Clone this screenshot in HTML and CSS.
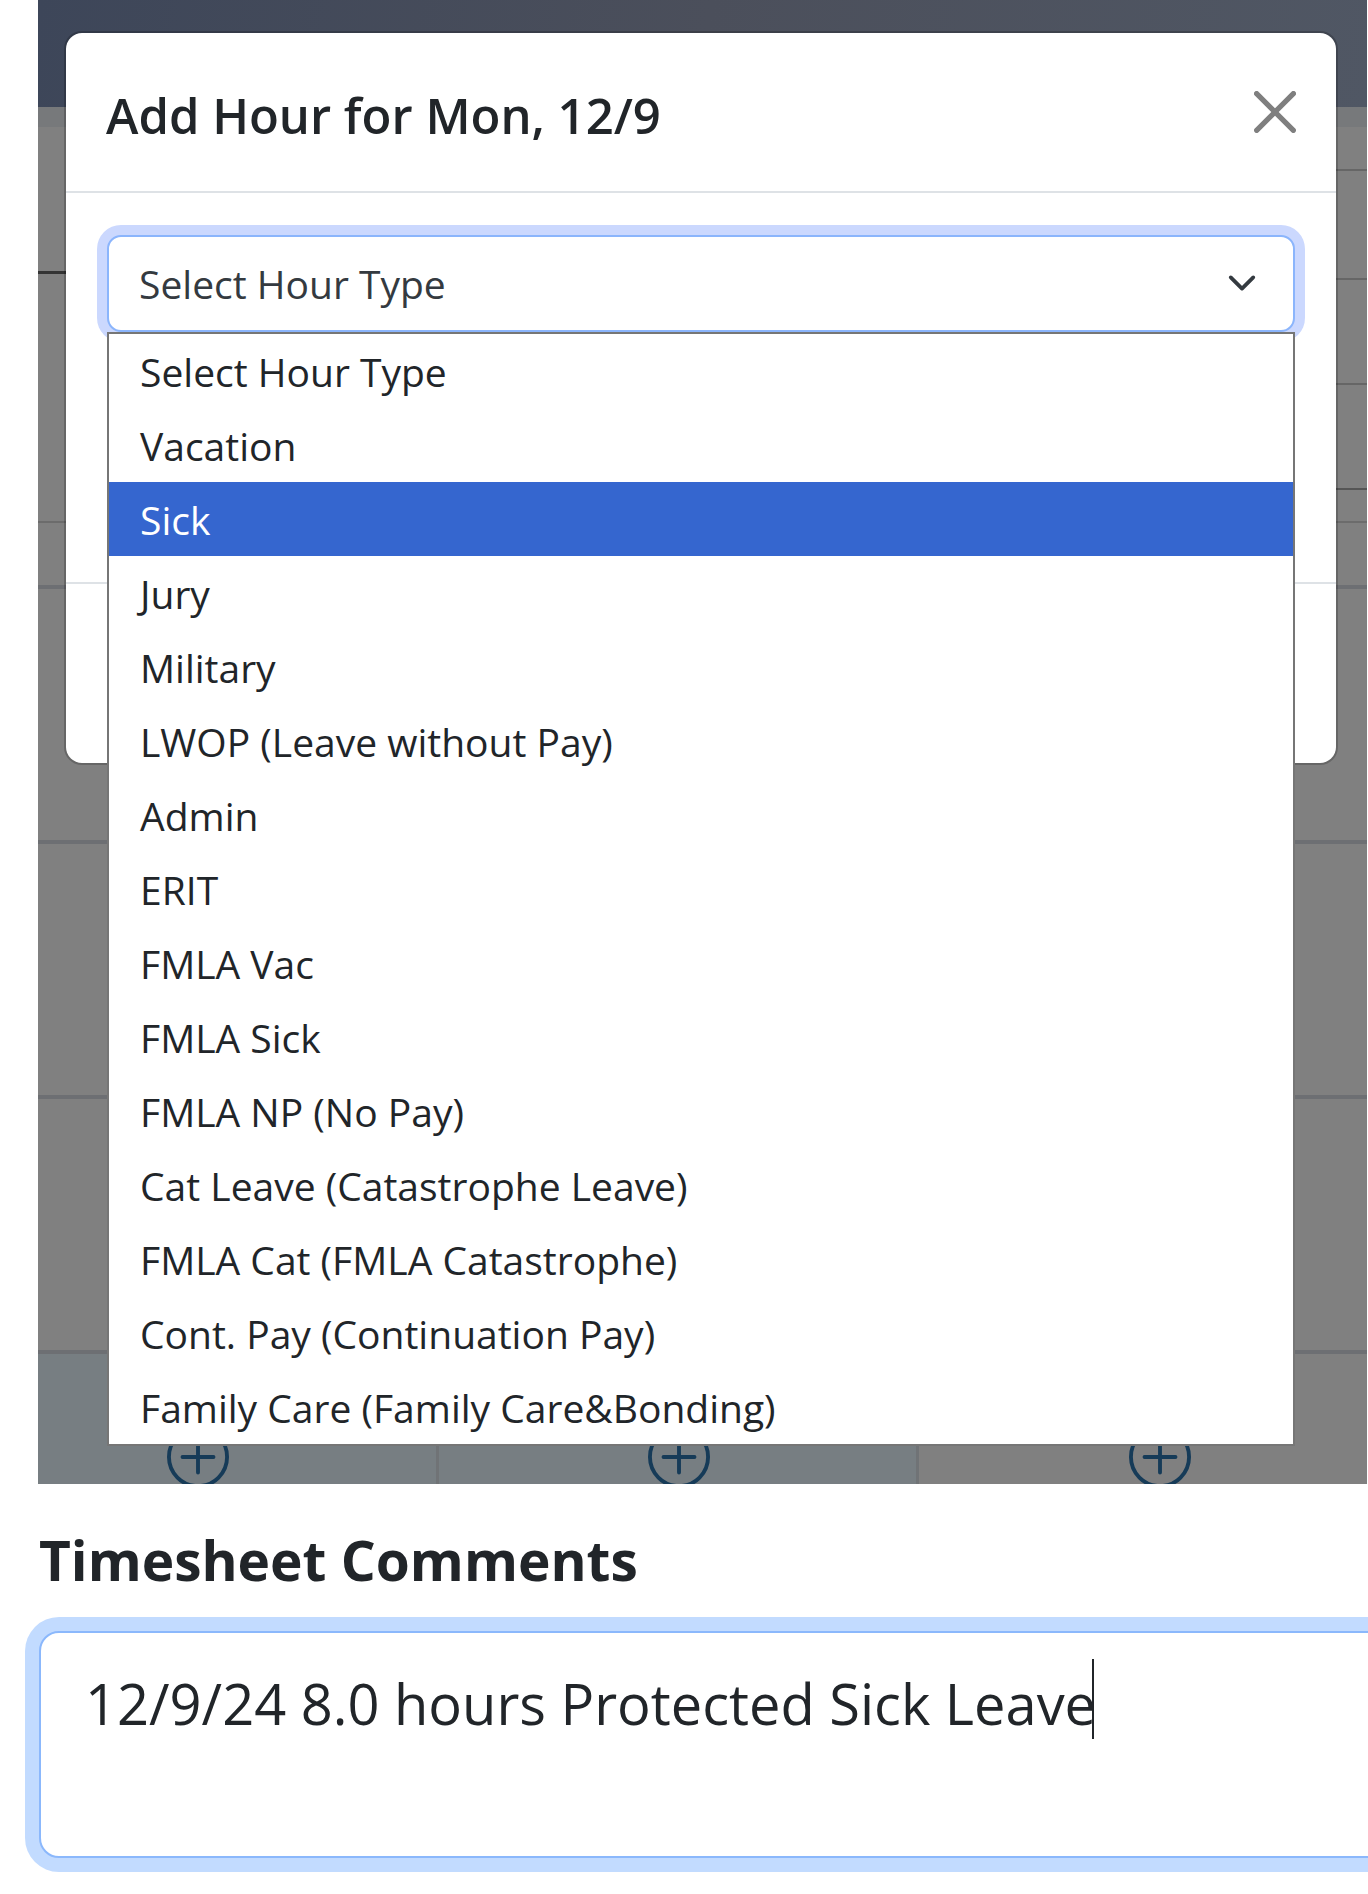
FILE: index.html
```html
<!DOCTYPE html>
<html lang="en">
<head>
    <meta charset="UTF-8">
    <meta name="viewport" content="width=device-width, initial-scale=1.0">
    <title>Timesheet - Add Hour</title>
    <link rel="stylesheet" href="styles.css">
</head>
<body>
    <main class="timesheet">
        <div class="banner"></div>
        <div class="toolbar"></div>

        <!-- employee details behind the dialog -->
        <div class="details">
            <div class="details-name"></div>
            <div class="details-rows">
                <div class="details-row short"></div>
                <div class="details-row tall"></div>
                <div class="details-row"></div>
                <div class="details-row last"></div>
            </div>
        </div>

        <!-- calendar -->
        <div class="calendar">
            <div class="calendar-title"></div>
            <div class="calendar-days"></div>
            <div class="week"></div>
            <div class="week"></div>
            <div class="week"></div>
            <div class="week week-current">
                <div class="day active">
                    <button type="button" class="add-btn" aria-label="Add hour">
                        <svg viewBox="0 0 16 16" fill="none" stroke="currentColor"><circle cx="8" cy="8" r="7.5"/><path d="M4 8h8M8 4v8" stroke-linecap="round"/></svg>
                    </button>
                </div>
                <div class="day active">
                    <button type="button" class="add-btn" aria-label="Add hour">
                        <svg viewBox="0 0 16 16" fill="none" stroke="currentColor"><circle cx="8" cy="8" r="7.5"/><path d="M4 8h8M8 4v8" stroke-linecap="round"/></svg>
                    </button>
                </div>
                <div class="day">
                    <button type="button" class="add-btn" aria-label="Add hour">
                        <svg viewBox="0 0 16 16" fill="none" stroke="currentColor"><circle cx="8" cy="8" r="7.5"/><path d="M4 8h8M8 4v8" stroke-linecap="round"/></svg>
                    </button>
                </div>
            </div>
        </div>

        <div class="modal" role="dialog" aria-labelledby="modalTitle">
            <div class="modal-header">
                <h2 id="modalTitle">Add Hour for Mon, 12/9</h2>
                <button type="button" class="close" aria-label="Close">
                    <svg viewBox="0 0 16 16" fill="currentColor"><path d="M.293.293a1 1 0 0 1 1.414 0L8 6.586 14.293.293a1 1 0 1 1 1.414 1.414L9.414 8l6.293 6.293a1 1 0 0 1-1.414 1.414L8 9.414l-6.293 6.293a1 1 0 0 1-1.414-1.414L6.586 8 .293 1.707a1 1 0 0 1 0-1.414z"/></svg>
                </button>
            </div>
            <div class="modal-body">
                <div class="select-wrap">
                    <select id="hourType" class="hour-select" aria-label="Hour type">
                        <option>Select Hour Type</option>
                    </select>
                    <svg class="chevron" viewBox="0 0 16 16" fill="none" stroke="currentColor" stroke-width="2" stroke-linecap="round" stroke-linejoin="round"><path d="m2 5 6 6 6-6"/></svg>
                    <ul class="options" role="listbox" aria-label="Hour type">
                        <li role="option">Select Hour Type</li>
                        <li role="option">Vacation</li>
                        <li role="option" class="selected" aria-selected="true">Sick</li>
                        <li role="option">Jury</li>
                        <li role="option">Military</li>
                        <li role="option">LWOP (Leave without Pay)</li>
                        <li role="option">Admin</li>
                        <li role="option">ERIT</li>
                        <li role="option">FMLA Vac</li>
                        <li role="option">FMLA Sick</li>
                        <li role="option">FMLA NP (No Pay)</li>
                        <li role="option">Cat Leave (Catastrophe Leave)</li>
                        <li role="option">FMLA Cat (FMLA Catastrophe)</li>
                        <li role="option">Cont. Pay (Continuation Pay)</li>
                        <li role="option">Family Care (Family Care&amp;Bonding)</li>
                    </ul>
                </div>
            </div>
            <div class="modal-footer"></div>
        </div>
    </main>

    <section class="comments">
        <label for="comments">Timesheet Comments</label>
        <div class="comments-field">
            <textarea id="comments" name="comments" spellcheck="false">12/9/24 8.0 hours Protected Sick Leave</textarea>
            <span class="caret"></span>
        </div>
    </section>
</body>
</html>
```

FILE: styles.css
```css
* {
    box-sizing: border-box;
}

body {
    margin: 0;
    background: #fff;
    color: #212529;
    font-family: "Segoe UI", "Open Sans", "Noto Sans", sans-serif;
    overflow-x: hidden;
}

button {
    padding: 0;
    border: none;
    background: none;
    cursor: pointer;
}

button svg {
    display: block;
    width: 100%;
    height: 100%;
}

/* page behind the dialog */
.timesheet {
    position: relative;
    margin: 0 1px 0 38px;
    background: #808080;
    overflow: hidden;
}

.banner {
    height: 107px;
    background: linear-gradient(100deg, #3d4659, #4b4f5b 50%, #505764);
}

.toolbar {
    height: 20px;
    background: #77797b;
}

.details {
    display: grid;
    grid-template-columns: 1fr 1fr;
    height: 362px;
}

.details-name {
    height: 147px;
    border-bottom: 3px solid #343434;
}

.details-row {
    height: 105px;
    border-bottom: 2px solid #666;
}

.details-row.short {
    height: 44px;
}

.details-row.tall {
    height: 109px;
}

.details-row.last {
    border-bottom-color: #555;
}

.calendar {
    margin: 0 -33px 0 -80px;
}

.calendar-title {
    height: 34px;
    border-bottom: 2px solid #6c6c6c;
}

.calendar-days {
    height: 66px;
    border-bottom: 4px solid #6d6f73;
}

.week {
    height: 255px;
    border-bottom: 4px solid #6d6f73;
}

.week-current {
    display: grid;
    grid-template-columns: repeat(3, 1fr);
    height: 130px;
    border-bottom: none;
}

.day {
    display: flex;
    justify-content: center;
    padding-top: 72px;
}

.day.active {
    background: #777e82;
    box-shadow: inset -3px 0 0 #707376;
}

.add-btn {
    width: 62px;
    height: 62px;
    color: #163b58;
}

/* dialog */
.modal {
    position: absolute;
    top: 31px;
    left: 26px;
    right: 29px;
    background: #fff;
    background-clip: padding-box;
    border: 2px solid rgba(0, 0, 0, 0.2);
    border-radius: 18px;
}

.modal-header {
    display: flex;
    align-items: center;
    justify-content: space-between;
    height: 160px;
    padding: 0 40px;
    border-bottom: 2px solid #dee2e6;
}

.modal-header h2 {
    margin: 0;
    padding-top: 6px;
    font-size: 49px;
    font-weight: 600;
    line-height: 72px;
}

.close {
    width: 42px;
    height: 42px;
    color: #7f7f7f;
}

.modal-body {
    height: 389px;
    padding: 42px 41px;
}

.select-wrap {
    position: relative;
}

.hour-select {
    display: block;
    width: 100%;
    height: 97px;
    padding: 0 30px;
    appearance: none;
    background: #fff;
    border: 2px solid #8bb5fc;
    border-radius: 14px;
    box-shadow: 0 0 0 10px #cbd8fe;
    color: #343a40;
    font-family: inherit;
    font-size: 39px;
    outline: none;
}

.chevron {
    position: absolute;
    top: 33px;
    right: 38px;
    width: 30px;
    height: 30px;
    color: #343a40;
    pointer-events: none;
}

.options {
    position: absolute;
    top: 97px;
    left: 0;
    right: 0;
    z-index: 10;
    margin: 0;
    padding: 0;
    list-style: none;
    background: #fff;
    border: 2px solid #767676;
}

.options li {
    height: 74px;
    padding: 2px 31px 0;
    font-size: 39px;
    line-height: 72px;
}

.options .selected {
    background: #3566cf;
    color: #fff;
}

.modal-footer {
    height: 181px;
    border-top: 2px solid #dee2e6;
}

/* comments */
.comments {
    padding: 36px 0 36px 39px;
}

.comments label {
    display: block;
    margin-bottom: 31px;
    font-size: 55px;
    font-weight: 700;
    line-height: 80px;
}

.comments-field {
    position: relative;
    margin-right: -40px;
}

.comments textarea {
    display: block;
    width: 100%;
    height: 227px;
    padding: 30px 44px 20px;
    background: #fff;
    border: 2px solid #8bb8fc;
    border-radius: 20px;
    box-shadow: 0 0 0 14px #c2dbff;
    color: #212529;
    font-family: inherit;
    font-size: 56px;
    line-height: 80px;
    outline: none;
    resize: none;
}

.caret {
    position: absolute;
    top: 28px;
    left: 1053px;
    width: 2px;
    height: 80px;
    background: #212529;
}
```
